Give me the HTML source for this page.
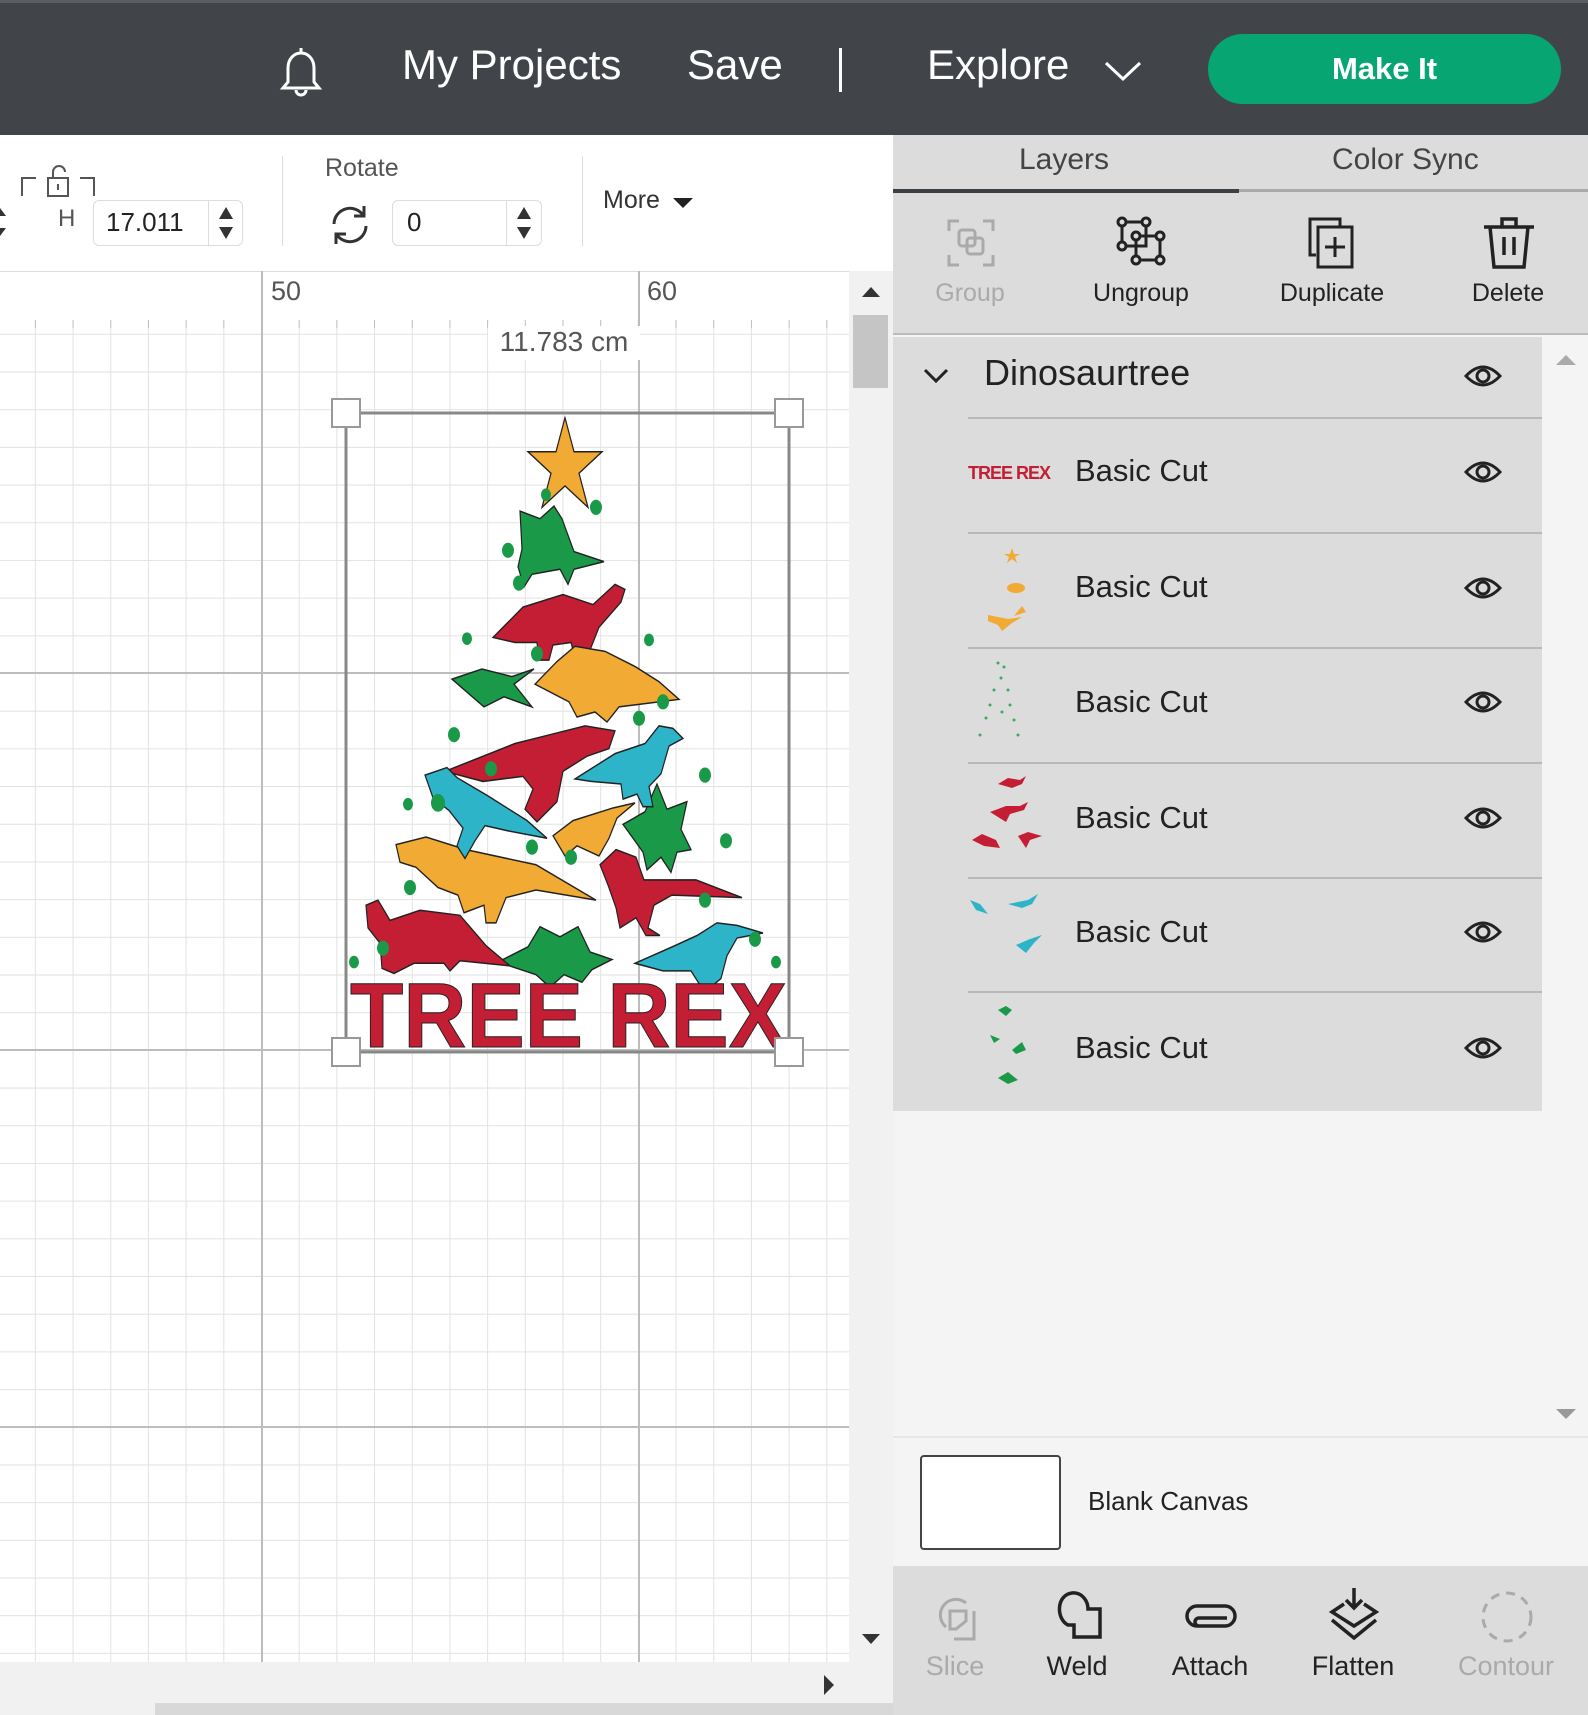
<!DOCTYPE html>
<html><head><meta charset="utf-8">
<style>
*{margin:0;padding:0;box-sizing:border-box}
body{width:1588px;height:1715px;position:relative;overflow:hidden;background:#fff;font-family:"Liberation Sans",sans-serif;color:#222}
.a{position:absolute}
.top{left:0;top:0;width:1588px;height:135px;background:#414549;border-top:3px solid #5a5e62}
.tt{color:#fff;font-size:42px;top:41px}
.grid{left:0;top:328px;width:849px;height:1334px;background-color:#fff;
background-image:
linear-gradient(90deg,#bdbdbd 2px,transparent 2px),
linear-gradient(0deg,#bdbdbd 2px,transparent 2px),
linear-gradient(90deg,#e2e2e2 1px,transparent 1px),
linear-gradient(0deg,#e2e2e2 1px,transparent 1px);
background-size:377px 377px,377px 377px,37.7px 37.7px,37.7px 37.7px;
background-position:261px 0,0 346px,261px 0,0 346px}
.ruler{left:0;top:271px;width:849px;height:57px;background:#fff;border-top:1px solid #ddd;
background-image:linear-gradient(90deg,#bbb 1px,transparent 1px);background-size:37.7px 9px;background-repeat:repeat-x;background-position:261px 48px}
.lbl{font-size:27px;color:#555}
.inp{border:1px solid #ddd;border-radius:6px;height:46px;background:#fff}
.tab{font-size:30px;color:#444;top:143px}
.tl{font-size:25px;top:279px;text-align:center;width:160px}
.row{left:968px;width:574px;border-top:2px solid #b9b9b9}
.bc{font-size:31px;left:1075px}
.bl{font-size:27px;top:1651px;text-align:center;width:140px}
</style></head><body>

<div class="a top"></div>
<svg class="a" style="left:276px;top:44px" width="50" height="56" viewBox="0 0 50 56" fill="none" stroke="#fff" stroke-width="3"><path d="M25 4v4M12 38V24c0-9 6-15 13-15s13 6 13 15v14l5 6H7z"/><path d="M20 46a5 5 0 0 0 10 0"/></svg>
<div class="a tt" style="left:402px">My Projects</div>
<div class="a tt" style="left:687px">Save</div>
<div class="a" style="left:839px;top:48px;width:3px;height:44px;background:#fff"></div>
<div class="a tt" style="left:927px">Explore</div>
<svg class="a" style="left:1103px;top:58px" width="40" height="26"><path d="M3 5l17 16 17-16" fill="none" stroke="#fff" stroke-width="3"/></svg>
<div class="a" style="left:1208px;top:34px;width:353px;height:70px;border-radius:35px;background:#06a572;color:#fff;font-size:31px;font-weight:bold;text-align:center;line-height:70px">Make It</div>

<!-- toolbar -->
<div class="a" style="left:0;top:135px;width:893px;height:136px;background:#fff"></div>
<svg class="a" style="left:0;top:200px" width="14" height="44"><path d="M0 8l6 8H0zM0 36l6-8H0z" fill="#333"/></svg>
<svg class="a" style="left:20px;top:160px" width="76" height="42" fill="none" stroke="#555" stroke-width="2"><path d="M2 36V18h14M74 36V18H60"/><rect x="28" y="18" width="20" height="18"/><path d="M33 18v-6a6 6 0 0 1 12 0"/><path d="M38 24v6"/></svg>
<div class="a lbl" style="left:58px;top:205px;font-size:24px">H</div>
<div class="a inp" style="left:93px;top:200px;width:150px"></div>
<div class="a" style="left:106px;top:207px;font-size:26px">17.011</div>
<div class="a" style="left:208px;top:200px;width:1px;height:46px;background:#ddd"></div>
<svg class="a" style="left:216px;top:203px" width="20" height="40"><path d="M3 16l7-12 7 12zM3 24l7 12 7-12z" fill="#333"/></svg>
<div class="a" style="left:282px;top:156px;width:1px;height:90px;background:#ddd"></div>
<div class="a lbl" style="left:325px;top:154px;font-size:25px">Rotate</div>
<svg class="a" style="left:326px;top:202px" width="48" height="46" fill="none" stroke="#333" stroke-width="3"><path d="M8 22a16 16 0 0 1 29-9M40 24a16 16 0 0 1-29 9"/><path d="M38 4v10H28M10 42V32h10"/></svg>
<div class="a inp" style="left:392px;top:200px;width:150px"></div>
<div class="a" style="left:407px;top:207px;font-size:26px">0</div>
<div class="a" style="left:506px;top:200px;width:1px;height:46px;background:#ddd"></div>
<svg class="a" style="left:514px;top:203px" width="20" height="40"><path d="M3 16l7-12 7 12zM3 24l7 12 7-12z" fill="#333"/></svg>
<div class="a" style="left:582px;top:156px;width:1px;height:90px;background:#ddd"></div>
<div class="a" style="left:603px;top:186px;font-size:25px;color:#333">More</div>
<svg class="a" style="left:672px;top:196px" width="22" height="14"><path d="M1 2h20L11 12z" fill="#222"/></svg>

<!-- canvas -->
<div class="a grid"></div>
<div class="a ruler"></div>
<div class="a" style="left:261px;top:271px;width:2px;height:57px;background:#bbb"></div>
<div class="a" style="left:638px;top:271px;width:2px;height:57px;background:#bbb"></div>
<div class="a lbl" style="left:271px;top:276px">50</div>
<div class="a lbl" style="left:647px;top:276px">60</div>
<div class="a" style="left:488px;top:326px;width:152px;height:34px;background:#fff;font-size:28px;color:#555;text-align:center">11.783 cm</div>

<svg class="a" style="left:0;top:0" width="849" height="1662" viewBox="0 0 849 1662">
<rect x="346" y="413" width="443" height="639" fill="none" stroke="#888" stroke-width="3"/>
<g transform="translate(0,400) scale(1,1.263) translate(0,-400)">
<g stroke="#222" stroke-width="1.2">
<polygon fill="#f1aa33" points="565,414 574,441 602,441 579,458 588,485 565,468 542,485 551,458 528,441 556,441"/>
<g fill="#1a9a48"><path d="M520 488l20 6 14-10 8 10 12 26 30 8-30 6-6 12-8-12-28 4-8 10-6-16 4-14z"/>
<path d="M452 621l30-8 30 6 22-6-20 12 18 18-28-8-20 8z"/>
<path d="M623 736l22-10 12-22 10 20 20-6-6 22 10 16-14 2-6 16-10-12-14 10-4-14z"/>
<path d="M498 845l30-12 12-16 20 8 18-8 12 20 22 6-20 8-10 10-18-6-14 10-14-10z"/></g>
<g fill="#c41e35"><path d="M493 588l30-24 40-10 30 8 22-16 10 4-4 10-22 20-12 24h-12l-4-12-18 2-4 12h-10l-2-14-22 0z"/>
<path d="M445 694l70-22 40-8 30-6 30 4-6 14-22 6-24 12-6 24-20 16-12-10 8-16-10-10-40 4z"/>
<path d="M600 768l16-12 20 6 8 18 52 0 46 14-70-2-18 8-6 18 12 6-14 0-10-14-16 8-4-16-8-18z"/>
<path d="M366 800l12-4 12 16 30-8 40 4 26 24 24 16-50-4-10 8-6-6-30 0-20 8-12-4-2-20-12-12z"/></g>
<g fill="#f1aa33"><path d="M535 625l22-18 18-12 30 4 30 12 24 12 20 14-40 4-20 2-12 12-12-8-18 4-8-12z"/>
<path d="M553 745l20-12 40-10 22-4-18 12-8 16-10 14-22-8-12 8z"/>
<path d="M396 752l30-6 40 10 70 12 60 28-60-8-30 6-10 20h-10l-2-14-20 6-6-14-20-6-22-16-16-4z"/></g>
<g fill="#2eb4c8"><path d="M575 700l40-20 30-8 14-14 14 2 10 8-14 6-8 22-12 10 4 16-10 0-6-10-14 4-2-12-30-2z"/>
<path d="M425 697l22-6 10 8 30 14 40 20 20 14-40-6-22-4-10 12-10 14-8-10 6-14-14-14-16-10z"/>
<path d="M635 846l40-14 22-8 20-10 20 2 26 6-26 4-10 14-6 18-12 8-10-4-8-10-28 0z"/></g>
</g>
<g fill="#1a9a48"><circle cx="546" cy="475" r="5"/><circle cx="596" cy="485" r="6"/><circle cx="508" cy="519" r="6"/><circle cx="519" cy="545" r="6"/><circle cx="467" cy="589" r="5"/><circle cx="649" cy="590" r="5"/><circle cx="537" cy="601" r="6"/><circle cx="663" cy="639" r="6"/><circle cx="438" cy="719" r="7"/><circle cx="454" cy="665" r="6"/><circle cx="639" cy="652" r="6"/><circle cx="491" cy="692" r="6"/><circle cx="705" cy="697" r="6"/><circle cx="408" cy="720" r="5"/><circle cx="532" cy="754" r="6"/><circle cx="571" cy="762" r="6"/><circle cx="726" cy="749" r="6"/><circle cx="410" cy="786" r="6"/><circle cx="705" cy="796" r="6"/><circle cx="383" cy="834" r="6"/><circle cx="755" cy="827" r="6"/><circle cx="776" cy="845" r="5"/><circle cx="354" cy="845" r="5"/></g>
</g>
<text x="350" y="1047" font-family="Liberation Sans" font-weight="bold" font-size="92" fill="#c41e35" stroke="#222" stroke-width="1" textLength="437" lengthAdjust="spacingAndGlyphs">TREE REX</text>
<g fill="#fff" stroke="#999" stroke-width="2"><rect x="332" y="399" width="28" height="28"/><rect x="775" y="399" width="28" height="28"/><rect x="332" y="1038" width="28" height="28"/><rect x="775" y="1038" width="28" height="28"/></g>
</svg>

<!-- scrollbars -->
<div class="a" style="left:849px;top:271px;width:44px;height:1391px;background:#f1f1f1"></div>
<svg class="a" style="left:861px;top:285px" width="20" height="14"><path d="M1 12L10 2l9 10z" fill="#333"/></svg>
<div class="a" style="left:853px;top:315px;width:35px;height:73px;background:#c5c5c5"></div>
<svg class="a" style="left:861px;top:1632px" width="20" height="14"><path d="M1 2h18l-9 10z" fill="#333"/></svg>
<div class="a" style="left:0;top:1662px;width:893px;height:53px;background:#f1f1f1"></div>
<svg class="a" style="left:822px;top:1674px" width="14" height="22"><path d="M2 1v20l10-10z" fill="#333"/></svg>
<div class="a" style="left:155px;top:1703px;width:738px;height:12px;background:#d8d8d8"></div>

<!-- right panel -->
<div class="a" style="left:893px;top:135px;width:695px;height:1580px;background:#f4f4f4"></div>
<div class="a" style="left:893px;top:135px;width:695px;height:200px;background:#dcdcdc;border-bottom:2px solid #bbb"></div>
<div class="a" style="left:893px;top:189px;width:695px;height:3px;background:#aaa"></div>
<div class="a" style="left:893px;top:189px;width:346px;height:4px;background:#3c4043"></div>
<div class="a tab" style="left:1019px">Layers</div>
<div class="a tab" style="left:1332px">Color Sync</div>
<svg class="a" style="left:945px;top:217px" width="52" height="52" fill="none" stroke="#aaa" stroke-width="3"><path d="M4 14V4h10M38 4h10v10M48 38v10H38M14 48H4V38"/><rect x="14" y="13" width="16" height="16" rx="3"/><rect x="22" y="21" width="16" height="16" rx="3"/></svg>
<svg class="a" style="left:1114px;top:214px" width="56" height="56" fill="none" stroke="#222" stroke-width="3"><rect x="8" y="8" width="24" height="24"/><rect x="22" y="22" width="24" height="24"/><g fill="#dcdcdc"><circle cx="8" cy="8" r="4"/><circle cx="32" cy="8" r="4"/><circle cx="8" cy="32" r="4"/><circle cx="22" cy="22" r="4"/><circle cx="46" cy="22" r="4"/><circle cx="22" cy="46" r="4"/><circle cx="46" cy="46" r="4"/></g></svg>
<svg class="a" style="left:1306px;top:215px" width="52" height="56" fill="none" stroke="#222" stroke-width="3"><path d="M10 40H4V4h30v8"/><rect x="12" y="12" width="34" height="40"/><path d="M29 22v20M19 32h20"/></svg>
<svg class="a" style="left:1482px;top:215px" width="54" height="56" fill="none" stroke="#222" stroke-width="3.5"><path d="M2 12h50M20 12V4h14v8M8 12l4 40h30l4-40M22 22v18M32 22v18"/></svg>
<div class="a tl" style="left:890px;color:#aaa">Group</div>
<div class="a tl" style="left:1061px">Ungroup</div>
<div class="a tl" style="left:1252px">Duplicate</div>
<div class="a tl" style="left:1428px">Delete</div>

<div class="a" style="left:893px;top:337px;width:649px;height:774px;background:#dcdcdc"></div>
<svg class="a" style="left:922px;top:366px" width="28" height="20"><path d="M3 4l11 11L25 4" fill="none" stroke="#222" stroke-width="3"/></svg>
<div class="a" style="left:984px;top:352px;font-size:36px;color:#222">Dinosaurtree</div>
<div class="a row" style="top:417px"></div>
<div class="a row" style="top:532px"></div>
<div class="a row" style="top:647px"></div>
<div class="a row" style="top:762px"></div>
<div class="a row" style="top:877px"></div>
<div class="a row" style="top:991px"></div>
<div class="a bc" style="top:453px">Basic Cut</div>
<div class="a bc" style="top:569px">Basic Cut</div>
<div class="a bc" style="top:684px">Basic Cut</div>
<div class="a bc" style="top:800px">Basic Cut</div>
<div class="a bc" style="top:914px">Basic Cut</div>
<div class="a bc" style="top:1030px">Basic Cut</div>
<svg class="a" style="left:1463px;top:360px" width="40" height="760" fill="none" stroke="#222" stroke-width="3">
<g id="e"><path d="M3 16Q20 -2 37 16Q20 34 3 16z"/><circle cx="20" cy="16" r="6"/></g>
<use href="#e" y="96"/><use href="#e" y="212"/><use href="#e" y="326"/><use href="#e" y="442"/><use href="#e" y="556"/><use href="#e" y="672"/></svg>
<div class="a" style="left:968px;top:463px;font-size:18px;font-weight:bold;color:#c41e35;letter-spacing:-1px">TREE REX</div>
<svg class="a" style="left:968px;top:540px" width="80" height="570">
<g fill="#f1aa33"><polygon points="44,8 46,14 52,14 47,17 49,23 44,19 39,23 41,17 36,14 42,14"/><ellipse cx="48" cy="48" rx="9" ry="5"/><path d="M20 75l20 4 14-2-10 6-10 8-4-6-10-4zM46 76l8-10 4 6z"/></g>
<g fill="#1a9a48" opacity=".8"><circle cx="30" cy="123" r="1.5"/><circle cx="36" cy="127" r="1.5"/><circle cx="33" cy="138" r="1.5"/><circle cx="26" cy="150" r="1.5"/><circle cx="40" cy="150" r="1.5"/><circle cx="22" cy="165" r="1.5"/><circle cx="42" cy="165" r="1.5"/><circle cx="18" cy="178" r="1.5"/><circle cx="46" cy="180" r="1.5"/><circle cx="34" cy="172" r="1.5"/><circle cx="12" cy="195" r="1.5"/><circle cx="50" cy="195" r="1.5"/></g>
<g fill="#c41e35"><path d="M30 244l10-6 12 2 6-4-4 8-10 4zM22 272l16-6 14 0 8-4-4 8-14 4-4 8zM4 300l10-6 14 6 4 8-16-2zM50 296l10-4 14 4-12 4-4 8z"/></g>
<g fill="#2eb4c8"><path d="M2 360l10 4 8 10-12-4zM40 364l20-4 10-6-6 10-10 4zM48 405l14-6 12-4-8 8-8 10z"/></g>
<g fill="#1a9a48"><path d="M30 470l8-4 6 4-6 6zM22 495l10 4-6 4zM44 510l10-8 4 8-10 4zM30 538l10-6 10 8-10 4z"/></g>
</svg>
<svg class="a" style="left:1555px;top:353px" width="22" height="14"><path d="M1 12L11 2l10 10z" fill="#aaa"/></svg>
<svg class="a" style="left:1555px;top:1407px" width="22" height="14"><path d="M1 2h20L11 12z" fill="#999"/></svg>

<div class="a" style="left:893px;top:1436px;width:695px;height:2px;background:#e6e6e6"></div>
<div class="a" style="left:920px;top:1455px;width:141px;height:95px;background:#fff;border:2px solid #444;border-radius:4px"></div>
<div class="a" style="left:1088px;top:1486px;font-size:26px;color:#222">Blank Canvas</div>

<div class="a" style="left:893px;top:1566px;width:695px;height:149px;background:#dcdcdc"></div>
<svg class="a" style="left:930px;top:1589px" width="52" height="56" fill="none" stroke="#aaa" stroke-width="3"><path d="M16 38A15 15 0 1 1 36 14"/><path d="M20 22h16v10l-10 8H20z"/><path d="M44 22v28H24"/></svg>
<svg class="a" style="left:1052px;top:1589px" width="52" height="56" fill="none" stroke="#222" stroke-width="3.5"><path d="M16 36C4 30 4 6 20 4c10-1 16 8 16 16h12v28H22V36z"/></svg>
<svg class="a" style="left:1183px;top:1596px" width="56" height="40" fill="none" stroke="#222" stroke-width="3.5"><path d="M38 30H14a10 10 0 0 1 0-20h28a10 10 0 0 1 0 20H16a4 4 0 0 1 0-8h28"/></svg>
<svg class="a" style="left:1328px;top:1586px" width="52" height="60" fill="none" stroke="#222" stroke-width="3.5"><path d="M26 2v20M18 14l8 8 8-8"/><path d="M16 18L4 26l22 14 22-14-12-8"/><path d="M4 34l22 18 22-18"/></svg>
<svg class="a" style="left:1480px;top:1589px" width="54" height="56" fill="none" stroke="#aaa" stroke-width="3" stroke-dasharray="9 7"><circle cx="27" cy="28" r="24"/></svg>
<div class="a bl" style="left:885px;color:#aaa">Slice</div>
<div class="a bl" style="left:1007px">Weld</div>
<div class="a bl" style="left:1140px">Attach</div>
<div class="a bl" style="left:1283px">Flatten</div>
<div class="a bl" style="left:1436px;color:#aaa">Contour</div>
</body></html>
